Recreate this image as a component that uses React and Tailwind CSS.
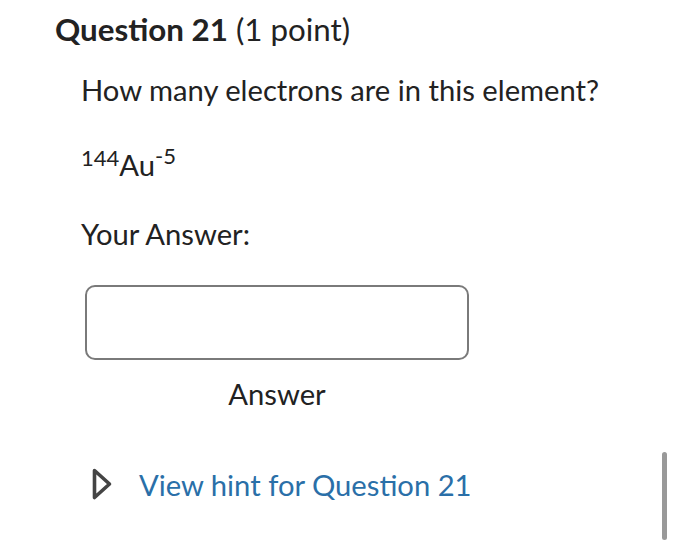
import React from 'react';

const App = () => {
  return (
    <div className="relative w-[700px] h-[560px] bg-white overflow-hidden leading-[1.2] text-[#222] font-['Lato','Liberation_Sans',sans-serif]">
      <div className="pl-[55px] pt-[11px] text-[31.3px]">
        <span className="font-bold">Question 21</span> (1 point)
      </div>
      <div className="pl-[81px] text-[29.2px]">
        <div className="mt-[23px]">How many electrons are in this element?</div>
        <div className="mt-[40px]">
          <sup className="text-[22px] -top-[10px]">144</sup>Au<sup className="text-[22px] -top-[12px]">-5</sup>
        </div>
        <div className="mt-[34px]">Your Answer:</div>
        <div className="ml-[4px] mt-[34px] w-[384px]">
          <input
            type="text"
            aria-label="Your Answer"
            className="block w-full h-[75px] border-2 border-[#7a7a7a] rounded-[10px] bg-white outline-none px-3"
          />
          <div className="mt-[16px] text-center">Answer</div>
        </div>
        <div className="mt-[56px] flex items-center">
          <svg width="22" height="34" viewBox="0 0 22 34" className="ml-[10px] shrink-0">
            <path d="M3.5 3.5 L18.5 17 L3.5 30.5 Z" fill="none" stroke="#444" strokeWidth="3.6" strokeLinejoin="round" />
          </svg>
          <a href="#" className="ml-[26px] text-[#2a6fa8]">View hint for Question 21</a>
        </div>
      </div>
      <div className="absolute left-[662px] top-[452px] w-[5px] h-[88px] rounded-full bg-[#999]" />
    </div>
  );
};

export default App;
